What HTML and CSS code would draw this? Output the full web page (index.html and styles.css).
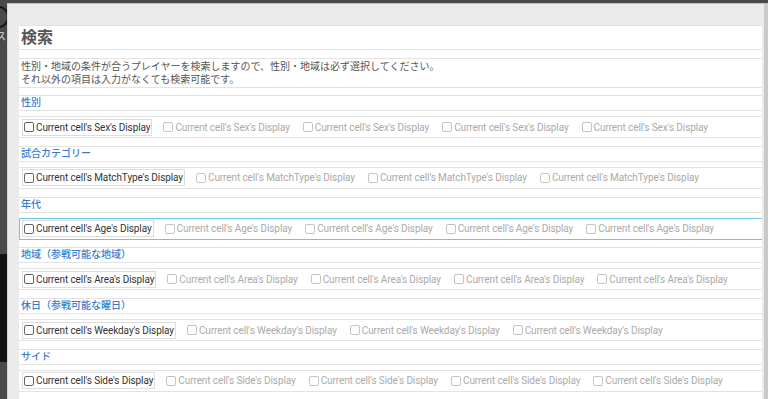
FILE: index.html
```html
<!DOCTYPE html>
<html lang="ja">
<head>
    <meta charset="UTF-8">
    <meta name="viewport" content="width=device-width, initial-scale=1.0">
    <title>検索</title>
    <link rel="stylesheet" href="styles.css">
</head>
<body>
  <div class="page-edge">
    <span class="edge-icon"></span>
    <span class="edge-text">ス</span>
    <span class="edge-dark"></span>
  </div>

  <div class="modal">
    <div class="modal-body">
      <div class="sheet">
        <div class="row title-row"><h1>検索</h1></div>
        <div class="row desc-row">
          <p>性別・地域の条件が合うプレイヤーを検索しますので、性別・地域は必ず選択してください。<br>それ以外の項目は入力がなくても検索可能です。</p>
        </div>

        <div class="row group-label">性別</div>
        <div class="row checks">
          <label class="opt current"><input type="checkbox">Current cell's Sex's Display</label>
          <label class="opt"><input type="checkbox">Current cell's Sex's Display</label>
          <label class="opt"><input type="checkbox">Current cell's Sex's Display</label>
          <label class="opt"><input type="checkbox">Current cell's Sex's Display</label>
          <label class="opt"><input type="checkbox">Current cell's Sex's Display</label>
        </div>

        <div class="row group-label">試合カテゴリー</div>
        <div class="row checks">
          <label class="opt current"><input type="checkbox">Current cell's MatchType's Display</label>
          <label class="opt"><input type="checkbox">Current cell's MatchType's Display</label>
          <label class="opt"><input type="checkbox">Current cell's MatchType's Display</label>
          <label class="opt"><input type="checkbox">Current cell's MatchType's Display</label>
        </div>

        <div class="row group-label">年代</div>
        <div class="row checks focused">
          <label class="opt current"><input type="checkbox">Current cell's Age's Display</label>
          <label class="opt"><input type="checkbox">Current cell's Age's Display</label>
          <label class="opt"><input type="checkbox">Current cell's Age's Display</label>
          <label class="opt"><input type="checkbox">Current cell's Age's Display</label>
          <label class="opt"><input type="checkbox">Current cell's Age's Display</label>
        </div>

        <div class="row group-label">地域（参戦可能な地域）</div>
        <div class="row checks">
          <label class="opt current"><input type="checkbox">Current cell's Area's Display</label>
          <label class="opt"><input type="checkbox">Current cell's Area's Display</label>
          <label class="opt"><input type="checkbox">Current cell's Area's Display</label>
          <label class="opt"><input type="checkbox">Current cell's Area's Display</label>
          <label class="opt"><input type="checkbox">Current cell's Area's Display</label>
        </div>

        <div class="row group-label">休日（参戦可能な曜日）</div>
        <div class="row checks">
          <label class="opt current"><input type="checkbox">Current cell's Weekday's Display</label>
          <label class="opt"><input type="checkbox">Current cell's Weekday's Display</label>
          <label class="opt"><input type="checkbox">Current cell's Weekday's Display</label>
          <label class="opt"><input type="checkbox">Current cell's Weekday's Display</label>
        </div>

        <div class="row group-label">サイド</div>
        <div class="row checks">
          <label class="opt current"><input type="checkbox">Current cell's Side's Display</label>
          <label class="opt"><input type="checkbox">Current cell's Side's Display</label>
          <label class="opt"><input type="checkbox">Current cell's Side's Display</label>
          <label class="opt"><input type="checkbox">Current cell's Side's Display</label>
          <label class="opt"><input type="checkbox">Current cell's Side's Display</label>
        </div>

        <div class="row group-label"></div>
      </div>
    </div>
    <div class="scrollbar"></div>
  </div>
</body>
</html>
```

FILE: styles.css
```css
body {
  margin: 0;
  height: 399px;
  overflow: hidden;
  display: flex;
  background-color: #4a4a4a;
  font-family: Roboto, "Noto Sans CJK JP", sans-serif;
}

/* the page behind the dialog */
.page-edge {
  width: 7px;
  flex: none;
  display: flex;
  flex-direction: column;
  overflow: hidden;
}

.edge-icon {
  flex: none;
  width: 16px;
  height: 18px;
  margin: 6px 0 0 -11px;
  border: 2px solid #161616;
  border-radius: 50%;
}

.edge-text {
  margin: 3px 0 0 -4px;
  font-size: 10px;
  line-height: 12px;
  color: #ddd;
}

.edge-dark {
  flex: none;
  height: 108px;
  margin-top: 211px;
  background-color: #121212;
}

/* dialog */
.modal {
  flex: 1;
  display: flex;
  margin-top: 3px;
  border-top: 1px solid #8fcde4;
  border-left: 1px solid #d6d6d6;
  background-color: #ebebeb;
  overflow: hidden;
}

.modal-body {
  flex: 1;
  padding: 21px 2px 0 11px;
  overflow: hidden;
}

.scrollbar {
  width: 4px;
  flex: none;
  background-color: #c9c9c9;
}

.sheet {
  background-color: #fff;
}

.row {
  border-top: 1px solid #e3e3e3;
  border-bottom: 1px solid #e3e3e3;
  padding: 0 2px;
}

.title-row {
  height: 23px;
  margin-bottom: 8px;
}

.title-row h1 {
  margin: 0;
  font-size: 16px;
  line-height: 23px;
  font-weight: bold;
  color: #555;
}

.desc-row {
  padding: 1px 2px;
  margin-bottom: 7px;
}

.desc-row p {
  margin: 0;
  font-size: 10px;
  line-height: 13px;
  color: #555;
}

.group-label {
  height: 14px;
  line-height: 14px;
  font-size: 10px;
  font-weight: 500;
  color: #3a7bcb;
  margin-bottom: 5px;
}

.checks {
  height: 20px;
  display: flex;
  align-items: center;
  padding-left: 3px;
  margin-bottom: 7.8px;
}

.checks.focused {
  border-color: #6dc4e4;
  border-left: 1px solid #6dc4e4;
  padding-left: 2px;
}

.opt {
  display: inline-flex;
  align-items: center;
  gap: 2px;
  flex: none;
  padding: 1px;
  margin-right: 9px;
  border: 1px solid transparent;
  font-size: 10px;
  line-height: 13px;
  letter-spacing: -0.1px;
  color: #aaa;
  white-space: nowrap;
}

.opt.current {
  border-color: #ddd;
  color: #333;
}

.opt input[type="checkbox"] {
  appearance: none;
  width: 10px;
  height: 10px;
  margin: 0;
  border: 1px solid #c4c4c4;
  border-radius: 2px;
  background-color: #fff;
}

.opt.current input[type="checkbox"] {
  border-color: #666;
}
```
